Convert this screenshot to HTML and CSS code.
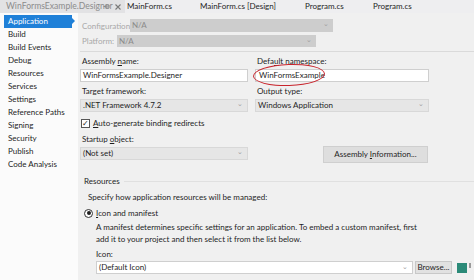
FILE: index.html
```html
<!DOCTYPE html>
<html lang="en">
<head>
    <meta charset="UTF-8">
    <title>WinFormsExample.Designer</title>
    <link rel="stylesheet" href="styles.css">
</head>
<body>
    <!-- Document tabs -->
    <div class="tabs">
        <div class="tab tab-active">
            <span class="tab-title">WinFormsExample.Designer</span>
            <svg class="tab-pin" width="7" height="7" viewBox="0 0 7 7">
                <path d="M0.5 3.5H3M3 1.5V5.5M3 2H6V5H3" fill="none" stroke="#8c8c8c" stroke-width="1"/>
            </svg>
            <svg class="tab-close" width="6" height="6" viewBox="0 0 6 6">
                <path d="M0.5 0.5L5.5 5.5M5.5 0.5L0.5 5.5" stroke="#7a7a7a" stroke-width="1.1"/>
            </svg>
        </div>
        <div class="tab tab-w2">MainForm.cs</div>
        <div class="tab tab-w3">MainForm.cs [Design]</div>
        <div class="tab tab-w4">Program.cs</div>
        <div class="tab">Program.cs</div>
    </div>

    <div class="page">
        <!-- Property page list -->
        <ul class="nav">
            <li class="nav-item selected">Application</li>
            <li class="nav-item">Build</li>
            <li class="nav-item">Build Events</li>
            <li class="nav-item">Debug</li>
            <li class="nav-item">Resources</li>
            <li class="nav-item">Services</li>
            <li class="nav-item">Settings</li>
            <li class="nav-item">Reference Paths</li>
            <li class="nav-item">Signing</li>
            <li class="nav-item">Security</li>
            <li class="nav-item">Publish</li>
            <li class="nav-item">Code Analysis</li>
        </ul>

        <div class="main">
            <div class="config-row">
                <span class="config-label label-config">Configuration:</span>
                <div class="config-box box-config">N/A<span class="chev">&#8964;</span></div>
            </div>
            <div class="config-row row-platform">
                <span class="config-label label-platform">Platform:</span>
                <div class="config-box box-platform">N/A<span class="chev">&#8964;</span></div>
            </div>

            <div class="sep"></div>

            <div class="form-grid">
                <div class="field">
                    <div class="label">Assembly <u>n</u>ame:</div>
                    <div class="textbox">WinFormsExample.Designer</div>
                </div>
                <div class="field">
                    <div class="label">Defa<u>u</u>lt namespace:</div>
                    <div class="textbox namespace">
                        WinFormsExample
                        <span class="circle"></span>
                    </div>
                </div>
                <div class="field">
                    <div class="label">Target framework:</div>
                    <div class="combo">.NET Framework 4.7.2<span class="chev">&#8964;</span></div>
                </div>
                <div class="field">
                    <div class="label">Output type:</div>
                    <div class="combo">Windows Application<span class="chev">&#8964;</span></div>
                </div>
            </div>

            <label class="check-row">
                <span class="checkbox">&#10003;</span>
                <span><u>A</u>uto-generate binding redirects</span>
            </label>

            <div class="form-grid startup">
                <div class="field">
                    <div class="label">Startup <u>o</u>bject:</div>
                    <div class="combo">(Not set)<span class="chev">&#8964;</span></div>
                </div>
                <div class="field button-cell">
                    <div class="button">Assembly <u>I</u>nformation...</div>
                </div>
            </div>

            <!-- Resources group -->
            <div class="group">
                <div class="group-head">
                    <span>Resources</span>
                    <span class="group-line"></span>
                </div>
                <div class="group-body">
                    <p class="group-text">Specify how application resources will be managed:</p>
                    <div class="radio-row">
                        <span class="radio"></span>
                        <span><u>I</u>con and manifest</span>
                    </div>
                    <p class="manifest-text">A manifest determines specific settings for an application. To embed a custom manifest, first<br>add it to your project and then select it from the list below.</p>
                    <div class="label icon-label">Icon:</div>
                    <div class="icon-row">
                        <div class="icon-combo">(Default Icon)<span class="chev">&#8964;</span></div>
                        <div class="small-button">Browse...</div>
                        <div class="icon-preview"><span class="preview-sq"></span><span class="preview-bar"></span></div>
                    </div>
                </div>
            </div>
        </div>
    </div>
</body>
</html>
```

FILE: styles.css
```css
/* Basic Styling */
body {
    margin: 0;
    width: 474px;
    height: 280px;
    overflow: hidden;
    font-family: "Segoe UI", Lato, "Noto Sans", sans-serif;
    font-size: 8px;
    color: #1e1e1e;
    background-color: #f0f0f0;
}

u {
    text-decoration: underline;
}

/* Tabs */
.tabs {
    display: flex;
    height: 13px;
    background-color: #eeeef0;
    line-height: 13px;
}

.tab {
    flex: none;
    padding-left: 2px;
    white-space: nowrap;
}

.tab-active {
    display: flex;
    align-items: center;
    width: 119px;
    padding-left: 6px;
    color: #8c8c8c;
    background-color: #e2e2e4;
}

.tab-title {
    width: 97px;
    font-size: 8.6px;
}

.tab-pin {
    margin-left: 0;
}

.tab-close {
    margin-left: 5px;
}

.tab-w2 {
    width: 71px;
}

.tab-w3 {
    width: 103px;
}

.tab-w4 {
    width: 66px;
}

/* Layout */
.page {
    display: flex;
    height: 267px;
}

.nav {
    list-style: none;
    margin: 0;
    padding: 2px 0 0;
    width: 78px;
    background-color: #fbfbfb;
}

.nav-item {
    height: 13px;
    line-height: 13px;
    padding-left: 8px;
}

.nav-item.selected {
    position: relative;
    margin: 0 6px 0 4px;
    padding-left: 4px;
    background-color: #1f80d8;
    color: white;
}

.nav-item.selected::after {
    content: "";
    position: absolute;
    right: -3px;
    top: 3px;
    border-top: 3px solid transparent;
    border-bottom: 3px solid transparent;
    border-left: 3px solid #1f80d8;
}

.main {
    flex: 1;
    padding-left: 2px;
}

/* Configuration / platform */
.config-row {
    display: flex;
    align-items: center;
    margin-top: 6px;
    height: 13px;
}

.row-platform {
    margin-top: 3px;
    height: 12px;
}

.config-label {
    color: #a8a8a8;
    padding-left: 2px;
}

.label-config {
    width: 48px;
}

.label-platform {
    width: 35px;
}

.config-box {
    position: relative;
    height: 100%;
    line-height: 13px;
    padding-left: 2px;
    background-color: #cdcdcd;
    color: #8a8a8a;
}

.box-config {
    width: 201px;
}

.box-platform {
    width: 197px;
}

.chev {
    position: absolute;
    right: 4px;
    top: -2px;
    color: #a0a0a0;
    font-size: 7px;
}

.sep {
    margin-top: 4px;
    border-top: 1px solid #dadada;
}

/* Form fields */
.form-grid {
    display: grid;
    grid-template-columns: 168px 174px;
    column-gap: 7px;
    row-gap: 3px;
    margin-top: 3px;
}

.label {
    height: 12px;
    line-height: 12px;
    padding-left: 2px;
    margin-bottom: 2px;
}

.textbox,
.combo,
.icon-combo {
    position: relative;
    box-sizing: border-box;
    height: 13px;
    line-height: 11px;
    padding-left: 2px;
    border: 1px solid #cfcfcf;
    background-color: white;
}

.combo {
    background-color: #e6e6e6;
    border-color: #d8d8d8;
}

.namespace {
    padding-left: 3px;
}

/* Red annotation round the namespace */
.circle {
    position: absolute;
    left: -3px;
    top: -6px;
    width: 70px;
    height: 20px;
    border: 1.5px solid #c8242c;
    border-radius: 50%;
    transform: rotate(-2deg);
}

.check-row {
    display: flex;
    align-items: center;
    margin-top: 6px;
    height: 10px;
    padding-left: 1px;
}

.checkbox {
    box-sizing: border-box;
    width: 9px;
    height: 9px;
    margin-right: 3px;
    border: 1px solid #555;
    background-color: white;
    font-size: 8px;
    line-height: 7px;
    text-align: center;
}

.startup {
    margin-top: 5px;
}

.button-cell {
    display: flex;
    justify-content: flex-end;
    align-items: flex-end;
}

.button {
    box-sizing: border-box;
    width: 105px;
    height: 17px;
    line-height: 15px;
    text-align: center;
    background-color: #dedede;
    border: 1px solid #cfcfcf;
    margin-bottom: -3px;
    margin-right: 1px;
}

/* Resources group */
.group {
    margin-top: 16px;
}

.group-head {
    display: flex;
    align-items: center;
    height: 10px;
    padding-left: 4px;
}

.group-line {
    flex: 1;
    margin-left: 4px;
    border-top: 1px solid #e0e0e0;
}

.group-body {
    padding-left: 8px;
}

.group-text {
    margin: 6px 0 0;
    line-height: 11px;
}

.radio-row {
    display: flex;
    align-items: center;
    margin-top: 5px;
    margin-left: -4px;
    height: 10px;
}

.radio {
    position: relative;
    box-sizing: border-box;
    width: 9px;
    height: 9px;
    margin-right: 3px;
    border: 1px solid #333;
    border-radius: 50%;
    background-color: white;
}

.radio::after {
    content: "";
    position: absolute;
    left: 1.5px;
    top: 1.5px;
    width: 4px;
    height: 4px;
    border-radius: 50%;
    background-color: #1e1e1e;
}

.manifest-text {
    margin: 3px 0 0 8px;
    line-height: 12px;
}

.icon-label {
    margin: 3px 0 1px 6px;
}

.icon-row {
    display: flex;
    align-items: center;
    margin-left: 8px;
}

.icon-combo {
    width: 317px;
}

.icon-combo .chev {
    top: -1px;
}

.small-button {
    box-sizing: border-box;
    width: 37px;
    height: 13px;
    margin-left: 2px;
    line-height: 11px;
    text-align: center;
    background-color: #e1e1e1;
    border: 1px solid #c8c8c8;
}

.icon-preview {
    display: flex;
    align-items: flex-start;
    margin-left: 5px;
}

.preview-sq {
    width: 10px;
    height: 10px;
    background-color: #2b8a78;
}

.preview-bar {
    width: 2px;
    height: 5px;
    margin-left: 2px;
    background-color: #9a9a9a;
}
```
